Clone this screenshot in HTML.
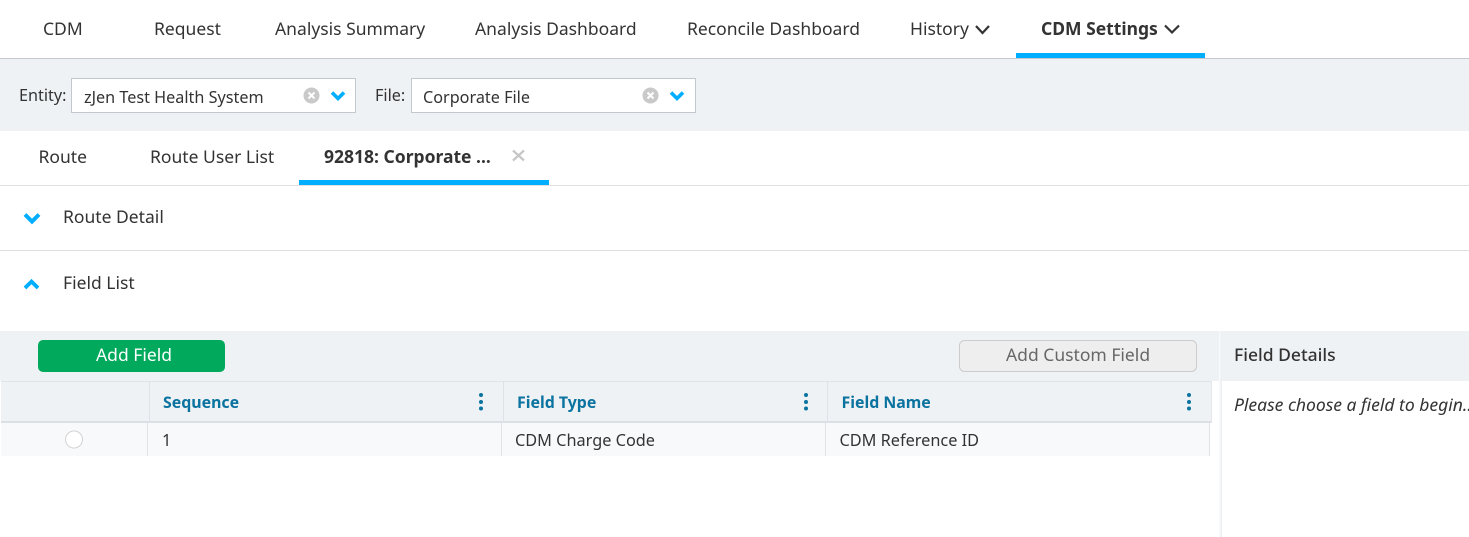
<!DOCTYPE html>
<html><head><meta charset="utf-8"><style>
html,body{margin:0;padding:0;background:#fff;width:1469px;height:537px;overflow:hidden}
body{position:relative;font-family:"Noto Sans","Liberation Sans",sans-serif;color:#333}
svg{display:block;position:absolute;left:0;top:0}
.t{position:absolute;white-space:nowrap;line-height:20px;font-size:17.5px}
.s{font-size:16.2px}
.r{font-size:16.3px}
.b{font-weight:700}
.h{font-size:15.9px;font-weight:700;color:#0b739f}
</style></head><body>
<svg width="1469" height="537" viewBox="0 0 1469 537" xmlns="http://www.w3.org/2000/svg">
<path d="M976 26l6.500 7 6.500-7" fill="none" stroke="#333" stroke-width="2.200"/>
<path d="M1165 25.500l7 7 7-7" fill="none" stroke="#333" stroke-width="2.200"/>
<rect x="1016" y="53" width="189" height="5" fill="#00aeff"/>
<rect x="0" y="58" width="1469" height="1" fill="#c5c8d0"/>
<rect x="0" y="59" width="1469" height="72" fill="#eff2f5"/>
<rect x="71.500" y="78.500" width="284" height="34" fill="#fff" stroke="#c3c7ce"/>
<circle cx="311.500" cy="95.500" r="8" fill="#c9c9c9"/>
<path d="M308.500 92.500l6 6m0-6l-6 6" stroke="#fff" stroke-width="2"/>
<path d="M332 92.500l6 6 6-6" fill="none" stroke="#00aeff" stroke-width="3.600"/>
<rect x="411.500" y="78.500" width="284" height="34" fill="#fff" stroke="#c3c7ce"/>
<circle cx="650.500" cy="95.500" r="8" fill="#c9c9c9"/>
<path d="M647.500 92.500l6 6m0-6l-6 6" stroke="#fff" stroke-width="2"/>
<path d="M671 92.500l6 6 6-6" fill="none" stroke="#00aeff" stroke-width="3.600"/>
<path d="M513 150.500l11 10m0-10l-11 10" stroke="#c6c6c6" stroke-width="2.200"/>
<rect x="299" y="180" width="250" height="5" fill="#00aeff"/>
<rect x="0" y="185" width="1469" height="1" fill="#e0e0e0"/>
<path d="M25 214.500l7 7 7-7" fill="none" stroke="#00aeff" stroke-width="4"/>
<rect x="0" y="250" width="1469" height="1" fill="#e0e0e0"/>
<path d="M25 288l6.500-6.500 6.500 6.500" fill="none" stroke="#00aeff" stroke-width="3.800"/>
<rect x="0" y="331" width="1469" height="50" fill="#eff2f5"/>
<rect x="38" y="340" width="187" height="32" rx="5" fill="#00a95c"/>
<rect x="959.500" y="340.500" width="237" height="31" rx="5" fill="#eeeeee" stroke="#cccccc"/>
<rect x="1219" y="331" width="1" height="206" fill="#f8f9fa"/>
<rect x="1220" y="331" width="1" height="206" fill="#f3f4f6"/>
<rect x="1221" y="331" width="1" height="206" fill="#eef0f2"/>
<rect x="1" y="381" width="1211" height="41" fill="#eff2f5"/>
<rect x="1" y="381" width="1211" height="1" fill="#e1e4e8"/>
<rect x="1" y="421" width="1211" height="2" fill="#dcdfe3"/>
<rect x="149" y="381" width="1" height="41" fill="#dfe2e6"/>
<rect x="503" y="381" width="1" height="41" fill="#dfe2e6"/>
<rect x="827" y="381" width="1" height="41" fill="#dfe2e6"/>
<rect x="1211" y="381" width="1" height="41" fill="#e4e7ea"/>
<g fill="#0b739f">
<circle cx="481" cy="395" r="2"/><circle cx="481" cy="402" r="2"/><circle cx="481" cy="408.500" r="2"/>
<circle cx="806" cy="395" r="2"/><circle cx="806" cy="402" r="2"/><circle cx="806" cy="408.500" r="2"/>
<circle cx="1189" cy="395" r="2"/><circle cx="1189" cy="402" r="2"/><circle cx="1189" cy="408.500" r="2"/>
</g>
<rect x="1" y="423" width="1209" height="33" fill="#f8f9fb"/>
<rect x="147" y="423" width="1" height="33" fill="#dfe2e6"/>
<rect x="501" y="423" width="1" height="33" fill="#dfe2e6"/>
<rect x="825" y="423" width="1" height="33" fill="#dfe2e6"/>
<rect x="1209" y="423" width="1" height="33" fill="#dfe2e6"/>
<circle cx="74" cy="439.500" r="8.500" fill="#fff" stroke="#d3d3d3"/>
</svg>
<div class="t" style="left:43px;top:19px">CDM</div>
<div class="t" style="left:154px;top:19px">Request</div>
<div class="t" style="left:275px;top:19px">Analysis Summary</div>
<div class="t" style="left:475px;top:19px">Analysis Dashboard</div>
<div class="t" style="left:687px;top:19px">Reconcile Dashboard</div>
<div class="t" style="left:910px;top:19px">History</div>
<div class="t b" style="left:1041px;top:19px">CDM Settings</div>
<div class="t s" style="left:19px;top:85px">Entity:</div>
<div class="t s" style="left:84px;top:87px">zJen Test Health System</div>
<div class="t s" style="left:375px;top:85px">File:</div>
<div class="t s" style="left:423px;top:87px">Corporate File</div>
<div class="t" style="left:38.500px;top:147px">Route</div>
<div class="t" style="left:150px;top:147px">Route User List</div>
<div class="t b" style="left:324px;top:147px">92818: Corporate ...</div>
<div class="t" style="left:63px;top:207px">Route Detail</div>
<div class="t" style="left:63px;top:273px">Field List</div>
<div class="t" style="left:96px;top:345px;color:#fff">Add Field</div>
<div class="t" style="left:1006px;top:345px;color:#666">Add Custom Field</div>
<div class="t" style="left:1234px;top:345px;font-weight:500">Field Details</div>
<div class="t" style="left:1234px;top:395px;font-style:italic">Please choose a field to begin...</div>
<div class="t h" style="left:163px;top:392px">Sequence</div>
<div class="t h" style="left:517px;top:392px">Field Type</div>
<div class="t h" style="left:841.500px;top:392px">Field Name</div>
<div class="t r" style="left:162px;top:430px">1</div>
<div class="t r" style="left:515px;top:430px">CDM Charge Code</div>
<div class="t r" style="left:839.500px;top:430px">CDM Reference ID</div>
</body></html>
